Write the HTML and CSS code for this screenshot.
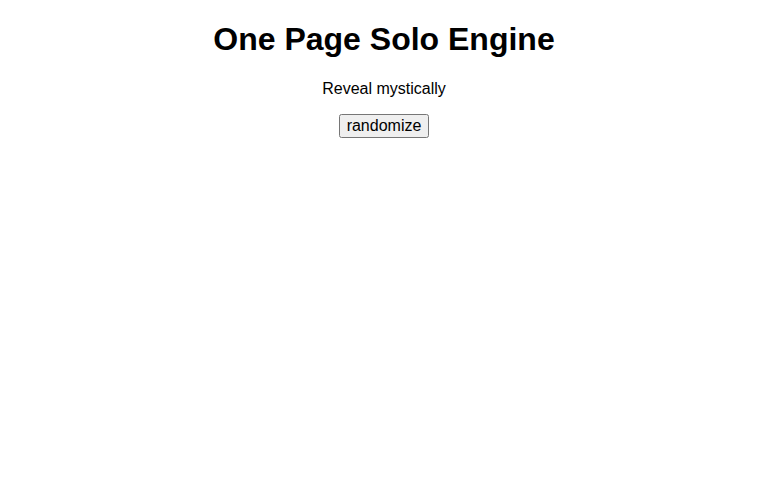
FILE: index.html
```html
<!DOCTYPE html>
<html>
<head>
<meta charset="utf-8">
<link rel="stylesheet" href="styles.css">
</head>
<body>
<div class="app">
  <h1 class="title">One Page Solo Engine</h1>
  <p class="result">Reveal mystically</p>
  <div class="actions">
    <button class="btn">randomize</button>
  </div>
</div>
</body>
</html>
```
FILE: styles.css
```css
body {
  margin: 0;
  font-family: "Liberation Sans", Arial, sans-serif;
  color: #000;
  background: #fff;
}
.app {
  text-align: center;
}
.title {
  font-size: 32px;
  margin: 21.44px 0;
}
.result {
  font-size: 16px;
  margin: 16px 0;
}
.actions {
  margin: 16px 0;
}
.btn {
  font-family: "Liberation Sans", Arial, sans-serif;
  font-size: 16px;
}
```
